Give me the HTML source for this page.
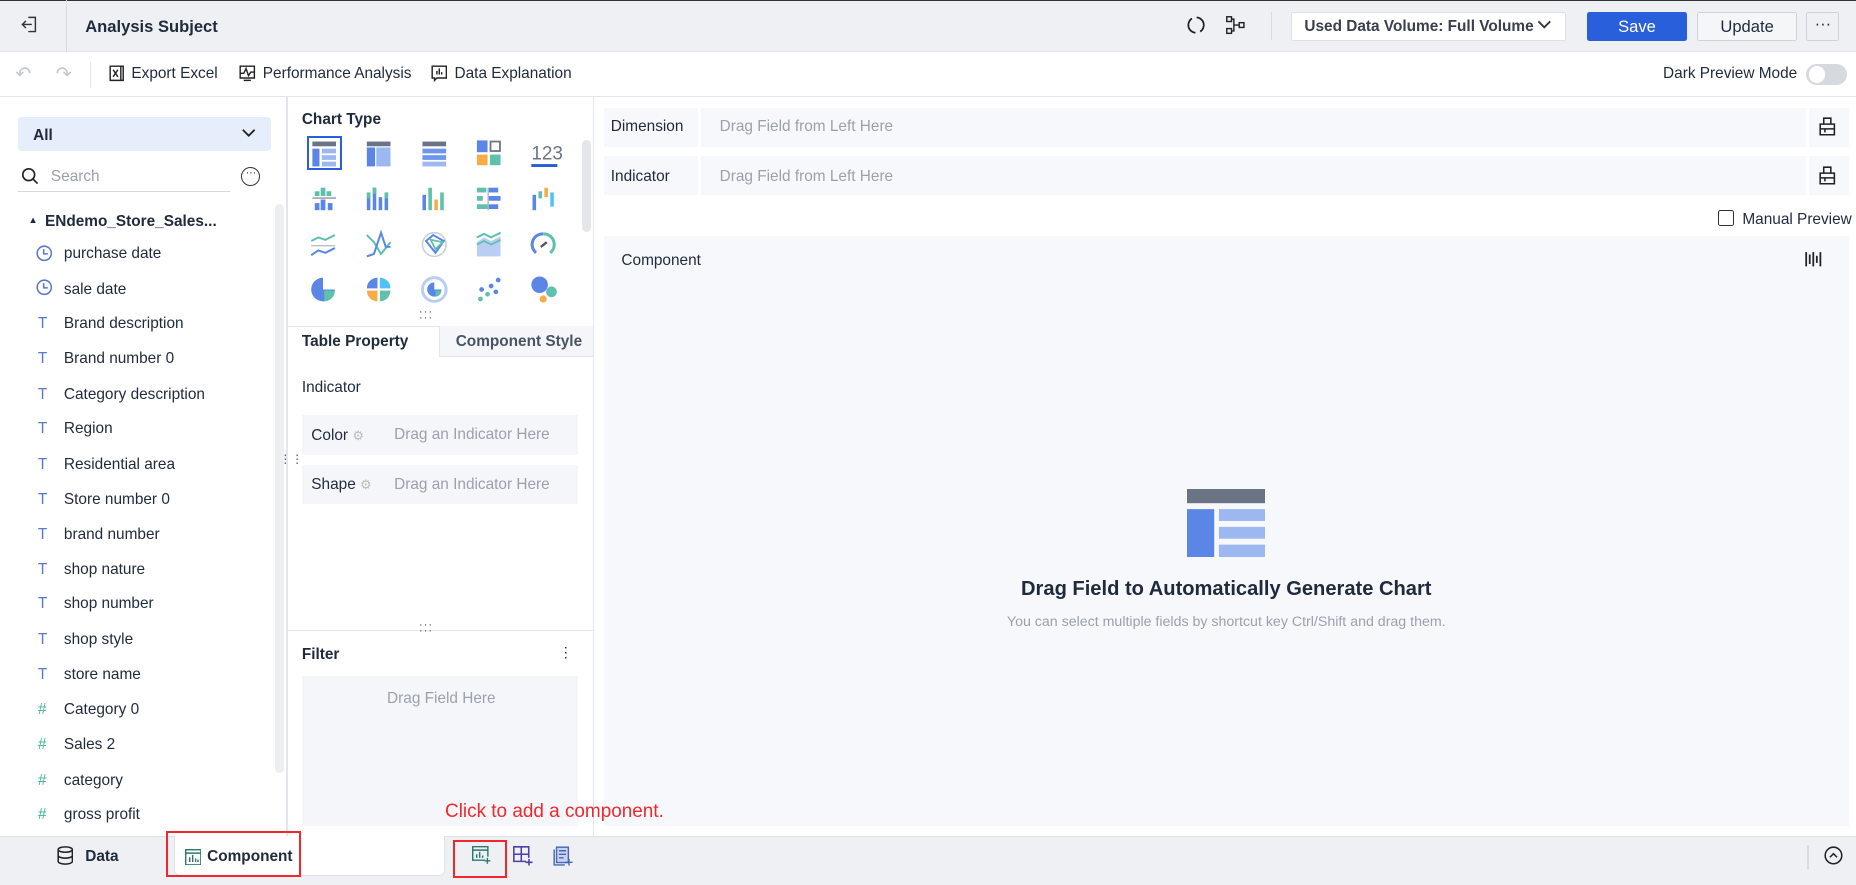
<!DOCTYPE html>
<html><head><meta charset="utf-8"><style>
*{box-sizing:border-box;margin:0;padding:0}
html,body{width:1856px;height:885px;overflow:hidden;background:#fff}
#r{zoom:1.18367;width:1568px;height:748px;position:relative;font-family:"Liberation Sans",Arial,sans-serif;color:#1f2a3c;font-size:13px;background:#fff}
.a{position:absolute}
.b{font-weight:bold}
.g{color:#9aa1ad}
svg{display:block}
.ti{position:absolute;left:30px;font-size:13px;color:#1f2a3c}
.ic{position:absolute;left:-22px;top:0}
.drop{background:#f5f6f9}
</style></head><body><div id="r">
<!-- header -->
<div class="a" style="left:0;top:0;width:1568px;height:44px;background:#eef0f4;border-bottom:1px solid #e1e4e9;border-top:1px solid #333"></div>
<div class="a" style="left:56px;top:0;width:1px;height:44px;background:#d8dbe0"></div>
<svg class="a" style="left:17px;top:13px" width="16" height="16" viewBox="0 0 16 16" fill="none" stroke="#333" stroke-width="1.2"><path d="M7 2h6v12H7M2 8h8M5 5L2 8l3 3"/></svg>
<div class="a b" style="left:72px;top:14px;font-size:14px">Analysis Subject</div>
<svg class="a" style="left:1002px;top:13px" width="17" height="17" viewBox="0 0 17 17" fill="none" stroke="#222" stroke-width="1.5"><path d="M5 3A6.5 6.5 0 0 0 8 15M12 14A6.5 6.5 0 0 0 9 2"/></svg>
<svg class="a" style="left:1035px;top:13px" width="18" height="17" viewBox="0 0 18 17" fill="none" stroke="#222" stroke-width="1.2"><rect x="1.5" y="1.5" width="4" height="4"/><rect x="1.5" y="11.5" width="4" height="4"/><rect x="12" y="6.5" width="4" height="4"/><path d="M5.5 3.5h2v10h-2M7.5 8.5h4.5"/></svg>
<div class="a" style="left:1074px;top:10px;width:1px;height:24px;background:#d8dbe0"></div>
<div class="a" style="left:1091px;top:10px;width:232px;height:25px;background:#fff;border:1px solid #dcdfe4;border-radius:2px"></div>
<div class="a b" style="left:1102px;top:15px;color:#39404d;font-size:13px">Used Data Volume: Full Volume</div>
<svg class="a" style="left:1298px;top:16px" width="14" height="10" viewBox="0 0 14 10" fill="none" stroke="#333" stroke-width="1.6"><path d="M2 2l5 5 5-5"/></svg>
<div class="a" style="left:1341px;top:10px;width:84px;height:25px;background:#2a5fdb;border-radius:2px;color:#fff;text-align:center;line-height:25px;font-size:14px">Save</div>
<div class="a" style="left:1434px;top:10px;width:84px;height:25px;background:#f5f6f8;border:1px solid #d0d3d9;border-radius:2px;text-align:center;line-height:23px;font-size:14px">Update</div>
<div class="a" style="left:1526px;top:10px;width:28px;height:25px;border:1px solid #d0d3d9;border-radius:2px;text-align:center;line-height:18px;font-size:14px">···</div>
<!-- toolbar -->
<div class="a" style="left:0;top:81px;width:1568px;height:1px;background:#e3e6eb"></div>
<div class="a" style="left:13px;top:53px;color:#c3c7ce;font-size:16px">↶</div>
<div class="a" style="left:47px;top:53px;color:#c3c7ce;font-size:16px">↷</div>
<div class="a" style="left:76px;top:52px;width:1px;height:22px;background:#e3e6eb"></div>
<svg class="a" style="left:92px;top:55px" width="14" height="14" viewBox="0 0 14 14" fill="none" stroke="#222" stroke-width="1.2"><path d="M1 1h9v12H1zM10 1h2v12h-2M3.5 4l4 6M7.5 4l-4 6"/></svg>
<div class="a" style="left:111px;top:55px">Export Excel</div>
<svg class="a" style="left:202px;top:55px" width="14" height="14" viewBox="0 0 14 14" fill="none" stroke="#222" stroke-width="1.2"><path d="M1 1h12v10H1zM1 7l3 0 2-4 2 6 2-3h3M4 13h6"/></svg>
<div class="a" style="left:222px;top:55px">Performance Analysis</div>
<svg class="a" style="left:364px;top:55px" width="14" height="14" viewBox="0 0 14 14" fill="none" stroke="#222" stroke-width="1.2"><path d="M1 1h12v10H5l-2 2v-2H1zM5 8V5M7 8V3M9 8V6"/></svg>
<div class="a" style="left:384px;top:55px">Data Explanation</div>
<div class="a" style="left:1405px;top:55px">Dark Preview Mode</div>
<div class="a" style="left:1526px;top:54px;width:34px;height:18px;border-radius:9px;background:#d6d9de"></div>
<div class="a" style="left:1528px;top:56px;width:14px;height:14px;border-radius:7px;background:#fff"></div>
<!-- left panel -->
<div class="a" style="left:15px;top:99px;width:214px;height:29px;background:#e6edfb;border-radius:3px"></div>
<div class="a b" style="left:28px;top:107px">All</div>
<svg class="a" style="left:204px;top:108px" width="13" height="9" viewBox="0 0 13 9" fill="none" stroke="#222" stroke-width="1.5"><path d="M1.5 1.5l5 5 5-5"/></svg>
<svg class="a" style="left:18px;top:141px" width="15" height="15" viewBox="0 0 15 15" fill="none" stroke="#222" stroke-width="1.4"><circle cx="6.5" cy="6.5" r="5"/><path d="M10 10l4 4"/></svg>
<div class="a g" style="left:43px;top:142px">Search</div>
<div class="a" style="left:15px;top:161px;width:179px;height:1px;background:#d5d8dd"></div>
<div class="a" style="left:204px;top:141px;width:16px;height:16px;border:1.3px solid #333;border-radius:50%;font-size:9px;text-align:center;line-height:10px">···</div>
<div class="a" style="left:232px;top:172px;width:8px;height:481px;background:#eceef1;border-radius:4px"></div>
<div class="a" style="left:24px;top:182px;font-size:8px">▲</div>
<div class="a b" style="left:38px;top:180px;font-size:13px">ENdemo_Store_Sales...</div>
<svg class="a" style="left:30px;top:207px" width="14" height="14" viewBox="0 0 14 14" fill="none" stroke="#5a77c9" stroke-width="1.3"><circle cx="7" cy="7" r="6"/><path d="M6.5 3.5V7.5H10"/></svg>
<svg class="a" style="left:30px;top:236px" width="14" height="14" viewBox="0 0 14 14" fill="none" stroke="#5a77c9" stroke-width="1.3"><circle cx="7" cy="7" r="6"/><path d="M6.5 3.5V7.5H10"/></svg>
<div class="a" style="left:24px;top:0;width:200px">
<div class="ti" style="top:207px">purchase date</div>
<div class="ti" style="top:237px">sale date</div>
<div class="ti" style="top:266px"><span class="ic" style="color:#5a77c9">T</span>Brand description</div>
<div class="ti" style="top:296px"><span class="ic" style="color:#5a77c9">T</span>Brand number 0</div>
<div class="ti" style="top:326px"><span class="ic" style="color:#5a77c9">T</span>Category description</div>
<div class="ti" style="top:355px"><span class="ic" style="color:#5a77c9">T</span>Region</div>
<div class="ti" style="top:385px"><span class="ic" style="color:#5a77c9">T</span>Residential area</div>
<div class="ti" style="top:415px"><span class="ic" style="color:#5a77c9">T</span>Store number 0</div>
<div class="ti" style="top:444px"><span class="ic" style="color:#5a77c9">T</span>brand number</div>
<div class="ti" style="top:474px"><span class="ic" style="color:#5a77c9">T</span>shop nature</div>
<div class="ti" style="top:503px"><span class="ic" style="color:#5a77c9">T</span>shop number</div>
<div class="ti" style="top:533px"><span class="ic" style="color:#5a77c9">T</span>shop style</div>
<div class="ti" style="top:563px"><span class="ic" style="color:#5a77c9">T</span>store name</div>
<div class="ti" style="top:592px"><span class="ic" style="color:#45b39d">#</span>Category 0</div>
<div class="ti" style="top:622px"><span class="ic" style="color:#45b39d">#</span>Sales 2</div>
<div class="ti" style="top:652px"><span class="ic" style="color:#45b39d">#</span>category</div>
<div class="ti" style="top:681px"><span class="ic" style="color:#45b39d">#</span>gross profit</div>
</div>
<div class="a" style="left:242px;top:82px;width:1px;height:624px;background:#e3e6eb"></div>
<div class="a" style="left:236px;top:386px;font-size:10px;line-height:5px;color:#555">⋮⋮</div>
<!-- middle -->
<div class="a" style="left:501px;top:82px;width:1px;height:624px;background:#e3e6eb"></div>
<div class="a b" style="left:255px;top:94px">Chart Type</div>
<div class="a" style="left:492px;top:118px;width:7px;height:78px;background:#e4e6ea;border-radius:4px"></div>
<div class="a" style="left:259px;top:115px;width:30px;height:29px;border:2px solid #2a5fdb"></div>
<svg class="a" style="left:262px;top:117px" width="220" height="140" viewBox="0 0 220 140">
<g transform="translate(2,3)"><rect width="20" height="4" fill="#6b7485"/><rect y="6" width="6" height="15" fill="#5b86e5"/><rect x="8" y="6" width="12" height="4" fill="#9db8f0"/><rect x="8" y="11.5" width="12" height="4" fill="#9db8f0"/><rect x="8" y="17" width="12" height="4" fill="#9db8f0"/></g>
<g transform="translate(48,3)"><rect width="20" height="4" fill="#6b7485"/><rect y="5" width="7" height="16" fill="#5b86e5"/><rect x="8" y="5" width="12" height="16" fill="#9db8f0"/></g>
<g transform="translate(95,3)"><rect width="20" height="4" fill="#6b7485"/><rect y="6" width="20" height="4" fill="#6d95eb"/><rect y="11.5" width="20" height="4" fill="#6d95eb"/><rect y="17" width="20" height="4" fill="#9db8f0"/></g>
<g transform="translate(141,2)"><rect width="9" height="10" fill="#5b86e5"/><rect x="11.5" y="1" width="8" height="8" fill="none" stroke="#6b7485" stroke-width="1.5"/><rect y="12" width="9" height="9" fill="#f7ad47"/><rect x="11" y="12" width="9" height="9" fill="#5ec0ad"/></g>
<text x="187" y="18" font-size="16" fill="#6b7485" font-family="Liberation Sans">123</text><rect x="187" y="22" width="22" height="2.5" fill="#2a5fdb"/>
<g transform="translate(2,42)"><rect x="7" y="0" width="4" height="7" fill="#5ec0ad"/><rect x="2" y="3" width="4" height="4" fill="#5ec0ad"/><rect x="12" y="3" width="4" height="4" fill="#5ec0ad"/><rect x="0" y="8" width="20" height="1.5" fill="#aab"/><rect x="2" y="13" width="4" height="6" fill="#5b86e5"/><rect x="7" y="10" width="4" height="9" fill="#5b86e5"/><rect x="13" y="13" width="4" height="6" fill="#5b86e5"/></g>
<g transform="translate(48,42)"><rect x="0" y="4" width="3" height="15" fill="#5b86e5"/><rect x="0" y="4" width="3" height="5" fill="#5ec0ad"/><rect x="5" y="0" width="3" height="19" fill="#5b86e5"/><rect x="5" y="0" width="3" height="5" fill="#5ec0ad"/><rect x="10" y="8" width="3" height="11" fill="#5b86e5"/><rect x="15" y="4" width="3" height="15" fill="#5b86e5"/><rect x="15" y="4" width="3" height="5" fill="#5ec0ad"/></g>
<g transform="translate(95,42)"><rect x="0" y="6" width="3" height="13" fill="#5b86e5"/><rect x="5" y="0" width="3" height="19" fill="#5ec0ad"/><rect x="10" y="10" width="3" height="9" fill="#f7ad47"/><rect x="15" y="4" width="3" height="15" fill="#5ec0ad"/></g>
<g transform="translate(141,42)"><rect width="8" height="4" fill="#5ec0ad"/><rect x="10" width="8" height="4" fill="#5b86e5"/><rect y="7" width="5" height="4" fill="#5ec0ad"/><rect x="10" y="7" width="10" height="4" fill="#5b86e5"/><rect y="14" width="9" height="4" fill="#5ec0ad"/><rect x="10" y="14" width="8" height="4" fill="#5b86e5"/><rect x="9" width="1" height="19" fill="#aab"/></g>
<g transform="translate(188,42)"><rect x="0" y="6" width="3" height="13" fill="#5b86e5"/><rect x="5" y="3" width="3" height="6" fill="#5ec0ad"/><rect x="10" y="0" width="3" height="8" fill="#f7ad47"/><rect x="15" y="4" width="3" height="12" fill="#4fc3f7"/></g>
<g transform="translate(1,80)" fill="none" stroke-width="1.7"><path d="M0 7l6-3 6 2 8-4" stroke="#5ec0ad"/><path d="M0 19l6-4 6 2 8-4" stroke="#5b86e5"/><path d="M0 11h20" stroke="#bbc" stroke-width="1.2"/></g>
<g transform="translate(48,80)" fill="none" stroke-width="1.7"><path d="M0 2l6 6 6 10 8-10" stroke="#5ec0ad"/><path d="M0 20l6-2 6-18 4 12 4 0" stroke="#5b86e5"/></g>
<g transform="translate(94,79)" fill="none"><circle cx="11" cy="11" r="10" stroke="#c8cfdc" stroke-width="1.3"/><path d="M4 8l6-5 9 5-7 10z" stroke="#5b86e5" stroke-width="1.7"/><path d="M8 7l10 2-6 6z" stroke="#5ec0ad" stroke-width="1.5"/></g>
<g transform="translate(141,80)"><path d="M0 8l6-4 6 3 8-4v17H0z" fill="#b9cdf5"/><path d="M0 4l6-3 6 3 8-4" fill="none" stroke="#5ec0ad" stroke-width="1.7"/><path d="M0 10l6-3 6 3 8-4" fill="none" stroke="#5ec0ad" stroke-width="1.5"/></g>
<g transform="translate(186,79)" fill="none" stroke-width="2.5"><path d="M5 18A9 9 0 0 1 11 2" stroke="#5b86e5"/><path d="M11 2A9 9 0 0 1 17 18" stroke="#5ec0ad"/><path d="M9 13l5-4" stroke="#555" stroke-width="2"/></g>
<g transform="translate(1,118)"><path d="M10 10V0A10 10 0 1 0 20 10z" fill="#5b86e5"/><path d="M11 11h9A9 9 0 0 1 11 20z" fill="#5ec0ad"/></g>
<g transform="translate(48,118)"><path d="M9 9V0A9 9 0 0 0 0 9z" fill="#5b86e5"/><path d="M11 9V0a9 9 0 0 1 9 9z" fill="#4fc3f7"/><path d="M9 11H0a9 9 0 0 0 9 9z" fill="#f7ad47"/><path d="M11 11h9a9 9 0 0 1-9 9z" fill="#5ec0ad"/></g>
<g transform="translate(94,117)"><circle cx="11" cy="11" r="10" fill="none" stroke="#b9cdf5" stroke-width="2.5"/><path d="M11 5a6 6 0 1 0 6 6h-6z" fill="#5b86e5"/><path d="M12 12h5a5 5 0 0 1-5 5z" fill="#5ec0ad"/></g>
<g transform="translate(141,118)"><circle cx="3" cy="18" r="2" fill="#5ec0ad"/><circle cx="9" cy="14" r="2" fill="#5ec0ad"/><circle cx="4" cy="10" r="2" fill="#5b86e5"/><circle cx="12" cy="7" r="2" fill="#5b86e5"/><circle cx="18" cy="2" r="2" fill="#5b86e5"/><circle cx="16" cy="12" r="2" fill="#5b86e5"/></g>
<g transform="translate(187,117)"><circle cx="7" cy="7" r="7" fill="#5b86e5"/><circle cx="17" cy="13" r="4.5" fill="#5ec0ad"/><circle cx="10" cy="19" r="3" fill="#f7ad47"/></g>
</svg>
<div class="a" style="left:354px;top:262px;font-size:9px;line-height:5px;color:#444;letter-spacing:1px">···<br>···</div>
<div class="a" style="left:243px;top:275px;width:258px;height:1px;background:#e3e6eb"></div>
<div class="a" style="left:371px;top:275px;width:130px;height:27px;background:#f5f6f9;border-left:1px solid #e3e6eb;border-bottom:1px solid #e3e6eb"></div>
<div class="a b" style="left:255px;top:281px">Table Property</div>
<div class="a b" style="left:385px;top:281px;color:#4a5363">Component Style</div>
<div class="a" style="left:255px;top:320px">Indicator</div>
<div class="a drop" style="left:255px;top:351px;width:233px;height:33px"></div>
<div class="a" style="left:263px;top:361px">Color <span style="color:#bbb;font-size:11px">⚙</span></div>
<div class="a g" style="left:333px;top:360px">Drag an Indicator Here</div>
<div class="a drop" style="left:255px;top:393px;width:233px;height:33px"></div>
<div class="a" style="left:263px;top:402px">Shape <span style="color:#bbb;font-size:11px">⚙</span></div>
<div class="a g" style="left:333px;top:402px">Drag an Indicator Here</div>
<div class="a" style="left:243px;top:532px;width:258px;height:1px;background:#e3e6eb"></div>
<div class="a" style="left:354px;top:526px;font-size:9px;line-height:5px;color:#444;letter-spacing:1px">···<br>···</div>
<div class="a b" style="left:255px;top:546px">Filter</div>
<div class="a" style="left:472px;top:545px;font-size:12px">⋮</div>
<div class="a drop" style="left:255px;top:571px;width:233px;height:127px"></div>
<div class="a g" style="left:327px;top:583px">Drag Field Here</div>
<!-- right -->
<div class="a drop" style="left:510px;top:91px;width:1052px;height:33px;background:#f7f8fb"></div>
<div class="a" style="left:590px;top:91px;width:2px;height:33px;background:#fff"></div>
<div class="a" style="left:1526px;top:91px;width:2px;height:33px;background:#fff"></div>
<div class="a" style="left:516px;top:100px">Dimension</div>
<div class="a g" style="left:608px;top:100px">Drag Field from Left Here</div>
<div class="a drop" style="left:510px;top:132px;width:1052px;height:33px;background:#f7f8fb"></div>
<div class="a" style="left:590px;top:132px;width:2px;height:33px;background:#fff"></div>
<div class="a" style="left:1526px;top:132px;width:2px;height:33px;background:#fff"></div>
<div class="a" style="left:516px;top:142px">Indicator</div>
<div class="a g" style="left:608px;top:142px">Drag Field from Left Here</div>
<svg class="a" style="left:1537px;top:99px" width="14" height="16" viewBox="0 0 14 16" fill="none" stroke="#222" stroke-width="1.3"><path d="M4 6V1h6v5M1 6h12v9H1zM1 10h12M5 10v3"/></svg>
<svg class="a" style="left:1537px;top:140px" width="14" height="16" viewBox="0 0 14 16" fill="none" stroke="#222" stroke-width="1.3"><path d="M4 6V1h6v5M1 6h12v9H1zM1 10h12M5 10v3"/></svg>
<div class="a" style="left:1451px;top:177px;width:14px;height:14px;border:1.2px solid #333;border-radius:2px"></div>
<div class="a" style="left:1472px;top:178px">Manual Preview</div>
<div class="a" style="left:510px;top:199px;width:1052px;height:499px;background:#f7f8fb"></div>
<div class="a" style="left:525px;top:213px">Component</div>
<svg class="a" style="left:1525px;top:212px" width="16" height="14" viewBox="0 0 16 14" stroke="#222" stroke-width="1.5"><path d="M1 1v12M4 3v8M7 1v12M10 4v6M13 1v12"/></svg>
<svg class="a" style="left:1003px;top:413px" width="66" height="58" viewBox="0 0 66 58"><rect width="66" height="12" fill="#6b7485"/><rect y="17" width="23" height="41" fill="#5b86e5"/><rect x="27" y="17" width="39" height="10" fill="#9db8f0"/><rect x="27" y="32" width="39" height="10" fill="#9db8f0"/><rect x="27" y="47" width="39" height="11" fill="#9db8f0"/></svg>
<div class="a b" style="left:510px;width:1052px;top:488px;text-align:center;font-size:17px;color:#1f2a3c">Drag Field to Automatically Generate Chart</div>
<div class="a g" style="left:510px;width:1052px;top:519px;text-align:center;font-size:12px">You can select multiple fields by shortcut key Ctrl/Shift and drag them.</div>
<!-- bottom -->
<div class="a" style="left:0;top:706px;width:1568px;height:42px;background:#eef0f4;border-top:1px solid #dfe2e7"></div>
<svg class="a" style="left:48px;top:715px" width="14" height="16" viewBox="0 0 14 16" fill="none" stroke="#222" stroke-width="1.3"><ellipse cx="7" cy="3" rx="6" ry="2.3"/><path d="M1 3v10c0 1.3 2.7 2.3 6 2.3s6-1 6-2.3V3M1 8c0 1.3 2.7 2.3 6 2.3S13 9.3 13 8"/></svg>
<div class="a b" style="left:72px;top:716px">Data</div>
<div class="a" style="left:147px;top:706px;width:229px;height:34px;background:#fff;border-radius:0 0 5px 5px;border:1px solid #dfe2e7;border-top:none"></div>
<div class="a" style="left:140px;top:702px;width:114px;height:39px;border:2px solid #f0282d"></div>
<svg class="a" style="left:156px;top:717px" width="14" height="14" viewBox="0 0 14 14" fill="none" stroke="#2c7a6d" stroke-width="1.2"><rect x=".6" y=".6" width="12.8" height="12.8"/><path d="M.6 3.5h12.8M4 11V7M6.5 11V5M9 11V8M11 11V9"/></svg>
<div class="a b" style="left:175px;top:716px">Component</div>
<div class="a" style="left:376px;top:677px;color:#f0282d;font-size:16px">Click to add a component.</div>
<div class="a" style="left:383px;top:710px;width:45px;height:32px;border:2px solid #f0282d"></div>
<svg class="a" style="left:399px;top:715px" width="16" height="16" viewBox="0 0 16 16" fill="none" stroke="#2c7a6d" stroke-width="1.2"><path d="M11 12H.6V.6h12.8V9M.6 3.5h12.8M4 10V7M6.5 10V5M9 10V8M13 10v5M10.5 12.5h5"/></svg>
<svg class="a" style="left:433px;top:715px" width="17" height="17" viewBox="0 0 17 17" fill="none" stroke="#4c3fa8" stroke-width="1.3"><path d="M11 13H.7V.7h12.6V10M7 .7V13M.7 7h12.6M13.5 11v5.5M10.5 13.8h6"/></svg>
<svg class="a" style="left:467px;top:715px" width="17" height="17" viewBox="0 0 17 17" fill="none" stroke="#4866b5" stroke-width="1.2"><rect x="3" y="1" width="10" height="13" fill="#c6d3f2"/><path d="M1 3v13h9M5 4h6M5 7h6M5 10h4M13.5 11v5.5M10.5 13.8h6"/></svg>
<div class="a" style="left:1527px;top:714px;width:1px;height:20px;background:#d8dbe0"></div>
<svg class="a" style="left:1541px;top:715px" width="16" height="16" viewBox="0 0 16 16" fill="none" stroke="#222" stroke-width="1.3"><circle cx="8" cy="8" r="7"/><path d="M5 9.5l3-3 3 3"/></svg>
</div></body></html>
